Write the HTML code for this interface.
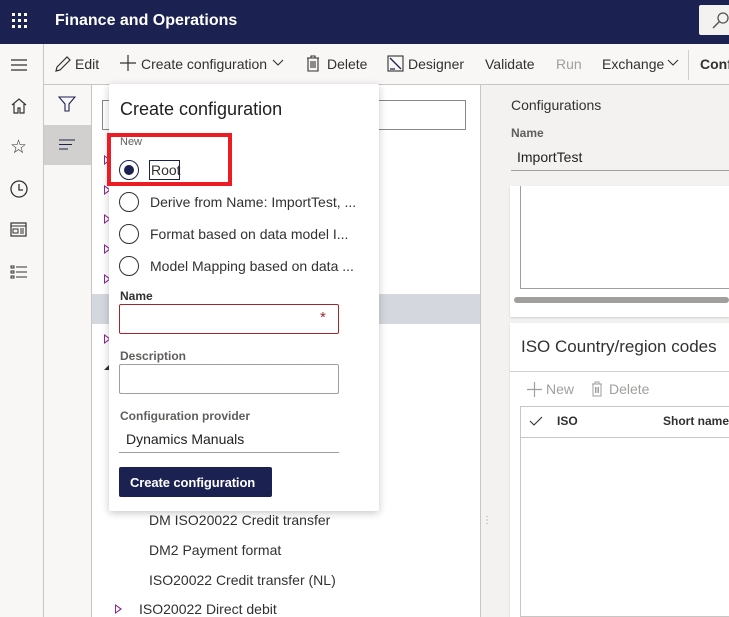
<!DOCTYPE html>
<html><head><meta charset="utf-8"><style>
*{box-sizing:border-box;margin:0;padding:0}
body{width:729px;height:617px;overflow:hidden;position:relative;font-family:"Liberation Sans",sans-serif;background:#f3f2f1;color:#323130}
.a{position:absolute}
.t{position:absolute;white-space:nowrap}
.tri{position:absolute;width:0;height:0;border-top:5px solid transparent;border-bottom:5px solid transparent;border-left:7px solid #8a2a8a}
.tri:after{content:"";position:absolute;left:-6px;top:-3px;border-top:3px solid transparent;border-bottom:3px solid transparent;border-left:4px solid #fff}
.rad{position:absolute;left:119px;width:20px;height:20px;border:1.5px solid #323130;border-radius:50%}
</style></head><body>
<div class="a" style="left:0;top:0;width:729px;height:44px;background:#1b2150"></div>
<svg class="a" style="left:11px;top:12px" width="18" height="18"><g fill="#fff">
<rect x="1" y="1" width="3" height="3"/><rect x="7" y="1" width="3" height="3"/><rect x="13" y="1" width="3" height="3"/>
<rect x="1" y="7" width="3" height="3"/><rect x="7" y="7" width="3" height="3"/><rect x="13" y="7" width="3" height="3"/>
<rect x="1" y="13" width="3" height="3"/><rect x="7" y="13" width="3" height="3"/><rect x="13" y="13" width="3" height="3"/></g></svg>
<div class="t" style="left:55px;top:12px;color:#fff;font-size:16px;font-weight:bold">Finance and Operations</div>
<div class="a" style="left:699px;top:5px;width:40px;height:30px;background:#f3f2f1;border-radius:2px"></div>
<svg class="a" style="left:712px;top:12px" width="17" height="17"><circle cx="11" cy="6" r="5" fill="none" stroke="#555" stroke-width="1.3"/><path d="M7 10L1 16" stroke="#555" stroke-width="1.5"/></svg>
<div class="a" style="left:0;top:44px;width:44px;height:573px;background:#f8f7f6;border-right:1px solid #c8c6c4"></div>
<svg class="a" style="left:10px;top:58px" width="18" height="14"><path d="M1 2H17M1 7H17M1 12H17" stroke="#323130" stroke-width="1.3"/></svg>
<svg class="a" style="left:10px;top:97px" width="18" height="18"><path d="M2 8L9 2L16 8M4 7V16H8V11H10V16H14V7" fill="none" stroke="#323130" stroke-width="1.2"/></svg>
<div class="t" style="left:10px;top:136px;font-size:19px">☆</div>
<svg class="a" style="left:9px;top:179px" width="20" height="20"><circle cx="10" cy="10" r="8" fill="none" stroke="#323130" stroke-width="1.3"/><path d="M10 5V11H14" fill="none" stroke="#323130" stroke-width="1.3"/></svg>
<svg class="a" style="left:10px;top:222px" width="18" height="16"><rect x="1" y="1" width="15" height="13" fill="none" stroke="#323130" stroke-width="1.2"/><path d="M1 4H16M3 7H8V11H3ZM10 7H14M10 9H14M10 11H14" fill="none" stroke="#323130" stroke-width="1"/></svg>
<svg class="a" style="left:10px;top:264px" width="18" height="16"><path d="M1 2H4V4H1ZM1 7H4V9H1ZM1 12H4V14H1ZM6 3H17M6 8H17M6 13H17" fill="none" stroke="#323130" stroke-width="1"/></svg>
<div class="a" style="left:44px;top:44px;width:685px;height:41px;background:#f8f7f6;border-bottom:1px solid #c8c6c4"></div>
<svg class="a" style="left:54px;top:55px" width="18" height="18"><path d="M2 16L3 12L13 2L16 5L6 15Z" fill="none" stroke="#323130" stroke-width="1.2"/></svg>
<div class="t" style="left:75px;top:56px;font-size:14px">Edit</div>
<svg class="a" style="left:120px;top:55px" width="16" height="16"><path d="M8 0V16M0 8H16" stroke="#323130" stroke-width="1.2"/></svg>
<div class="t" style="left:141px;top:56px;font-size:14px">Create configuration</div>
<svg class="a" style="left:272px;top:59px" width="12" height="8"><path d="M1 1L6 6L11 1" fill="none" stroke="#323130" stroke-width="1.1"/></svg>
<svg class="a" style="left:306px;top:55px" width="14" height="17"><path d="M1 3H13M5 3V1H9V3M2 3V16H12V3M5 6V13M7 6V13M9 6V13" fill="none" stroke="#323130" stroke-width="1.1"/></svg>
<div class="t" style="left:327px;top:56px;font-size:14px">Delete</div>
<svg class="a" style="left:387px;top:55px" width="17" height="17"><rect x="1" y="1" width="15" height="15" fill="none" stroke="#323130" stroke-width="1.1"/><path d="M3 3L14 14M3 14H8" stroke="#1b2150" stroke-width="1.3"/></svg>
<div class="t" style="left:408px;top:56px;font-size:14px">Designer</div>
<div class="t" style="left:485px;top:56px;font-size:14px">Validate</div>
<div class="t" style="left:556px;top:56px;font-size:14px;color:#a19f9d">Run</div>
<div class="t" style="left:602px;top:56px;font-size:14px">Exchange</div>
<svg class="a" style="left:667px;top:59px" width="12" height="8"><path d="M1 1L6 6L11 1" fill="none" stroke="#323130" stroke-width="1.1"/></svg>
<div class="a" style="left:688px;top:50px;width:1px;height:30px;background:#d2d0ce"></div>
<div class="t" style="left:700px;top:56px;font-size:14px;font-weight:bold">Conf</div>
<div class="a" style="left:44px;top:85px;width:48px;height:532px;background:#f8f7f6;border-right:1px solid #c8c6c4"></div>
<div class="a" style="left:44px;top:125px;width:47px;height:40px;background:#d2d0ce"></div>
<svg class="a" style="left:58px;top:96px" width="18" height="16"><path d="M1 1H17L11 8V15H7V8Z" fill="none" stroke="#1b2150" stroke-width="1.1"/></svg>
<svg class="a" style="left:58px;top:139px" width="18" height="12"><path d="M1 1H17M1 5.5H14M1 10H10" stroke="#1b2150" stroke-width="1.1"/></svg>
<div class="a" style="left:92px;top:85px;width:389px;height:532px;background:#fff;border-right:1px solid #c8c6c4"></div>
<div class="a" style="left:102px;top:100px;width:364px;height:30px;border:1px solid #8a8886"></div>
<div class="a" style="left:92px;top:294px;width:388px;height:30px;background:#d4d7de"></div>
<div class="tri" style="left:104px;top:155px"></div>
<div class="tri" style="left:104px;top:185px"></div>
<div class="tri" style="left:104px;top:214px"></div>
<div class="tri" style="left:104px;top:244px"></div>
<div class="tri" style="left:104px;top:274px"></div>
<div class="tri" style="left:104px;top:334px"></div>
<div class="a" style="left:104px;top:364px;width:0;height:0;border-left:6px solid transparent;border-bottom:6px solid #323130"></div>
<div class="t" style="left:149px;top:512px;font-size:14px">DM ISO20022 Credit transfer</div>
<div class="t" style="left:149px;top:542px;font-size:14px">DM2 Payment format</div>
<div class="t" style="left:149px;top:572px;font-size:14px">ISO20022 Credit transfer (NL)</div>
<div class="tri" style="left:115px;top:604px"></div>
<div class="t" style="left:139px;top:601px;font-size:14px">ISO20022 Direct debit</div>
<div class="t" style="left:482px;top:515px;font-size:10px;color:#a19f9d">⋮</div>
<div class="t" style="left:511px;top:97px;font-size:14px">Configurations</div>
<div class="t" style="left:511px;top:126px;font-size:12px;font-weight:bold;color:#605e5c">Name</div>
<div class="t" style="left:517px;top:149px;font-size:14px;color:#201f1e">ImportTest</div>
<div class="a" style="left:511px;top:170px;width:218px;height:1px;background:#a19f9d"></div>
<div class="a" style="left:510px;top:186px;width:219px;height:131px;background:#fff;box-shadow:0 1px 2px rgba(0,0,0,.15)"></div>
<div class="a" style="left:520px;top:186px;width:209px;height:103px;border:1px solid #a19f9d;border-top:none;border-right:none"></div>
<div class="a" style="left:514px;top:297px;width:215px;height:6px;background:#a19f9d;border-radius:3px"></div>
<div class="a" style="left:510px;top:323px;width:219px;height:294px;background:#fff;box-shadow:0 1px 2px rgba(0,0,0,.15)"></div>
<div class="t" style="left:521px;top:337px;font-size:17px">ISO Country/region codes</div>
<div class="a" style="left:510px;top:371px;width:219px;height:1px;background:#d2d0ce"></div>
<svg class="a" style="left:527px;top:382px" width="15" height="15"><path d="M7.5 0V15M0 7.5H15" stroke="#a19f9d" stroke-width="1.2"/></svg>
<div class="t" style="left:546px;top:381px;font-size:14px;color:#a19f9d">New</div>
<svg class="a" style="left:591px;top:381px" width="12" height="16"><path d="M1 3H11M4 3V1H8V3M2 3V15H10V3M4.5 6V12M6 6V12M7.5 6V12" fill="none" stroke="#a19f9d" stroke-width="1"/></svg>
<div class="t" style="left:609px;top:381px;font-size:14px;color:#a19f9d">Delete</div>
<div class="a" style="left:520px;top:406px;width:209px;height:211px;border:1px solid #c8c6c4;border-right:none"></div>
<div class="a" style="left:520px;top:437px;width:209px;height:1px;background:#c8c6c4"></div>
<svg class="a" style="left:529px;top:415px" width="14" height="12"><path d="M1 6L5 10L13 2" fill="none" stroke="#323130" stroke-width="1.1"/></svg>
<div class="t" style="left:557px;top:414px;font-size:12px;font-weight:bold">ISO</div>
<div class="t" style="left:663px;top:414px;font-size:12px;font-weight:bold">Short name</div>
<div class="a" style="left:109px;top:84px;width:270px;height:427px;background:#fff;box-shadow:0 2px 8px rgba(0,0,0,.22);border-radius:2px"></div>
<div class="t" style="left:120px;top:99px;font-size:18px;color:#201f1e">Create configuration</div>
<div class="a" style="left:107px;top:133px;width:125px;height:53px;border:4px solid #ec1c24"></div>
<div class="t" style="left:120px;top:136px;font-size:11px;color:#605e5c">New</div>
<div class="rad" style="top:160px;border-color:#1b2150"><div class="a" style="left:3.5px;top:3.5px;width:10px;height:10px;background:#1b2150;border-radius:50%"></div></div>
<div class="a" style="left:149px;top:160px;width:31px;height:20px;border:1px solid #1b2150"></div>
<div class="t" style="left:151px;top:162px;font-size:14px">Root</div>
<div class="rad" style="top:192px"></div>
<div class="t" style="left:150px;top:194px;font-size:14px">Derive from Name: ImportTest, ...</div>
<div class="rad" style="top:224px"></div>
<div class="t" style="left:150px;top:226px;font-size:14px">Format based on data model I...</div>
<div class="rad" style="top:256px"></div>
<div class="t" style="left:150px;top:258px;font-size:14px">Model Mapping based on data ...</div>
<div class="t" style="left:120px;top:289px;font-size:12px;font-weight:bold;color:#323130">Name</div>
<div class="a" style="left:119px;top:304px;width:220px;height:30px;border:1px solid #a4262c;border-radius:2px"></div>
<div class="t" style="left:320px;top:309px;font-size:15px;color:#a4262c">*</div>
<div class="t" style="left:120px;top:349px;font-size:12px;font-weight:bold;color:#605e5c">Description</div>
<div class="a" style="left:119px;top:364px;width:220px;height:30px;border:1px solid #a19f9d;border-radius:2px"></div>
<div class="t" style="left:120px;top:409px;font-size:12px;font-weight:bold;color:#605e5c">Configuration provider</div>
<div class="t" style="left:126px;top:431px;font-size:14px;color:#201f1e">Dynamics Manuals</div>
<div class="a" style="left:119px;top:452px;width:220px;height:1px;background:#a19f9d"></div>
<div class="a" style="left:119px;top:467px;width:153px;height:30px;background:#1b2150;border-radius:2px"></div>
<div class="t" style="left:130px;top:475px;font-size:13px;font-weight:bold;color:#fff;letter-spacing:-0.1px">Create configuration</div>
</body></html>
